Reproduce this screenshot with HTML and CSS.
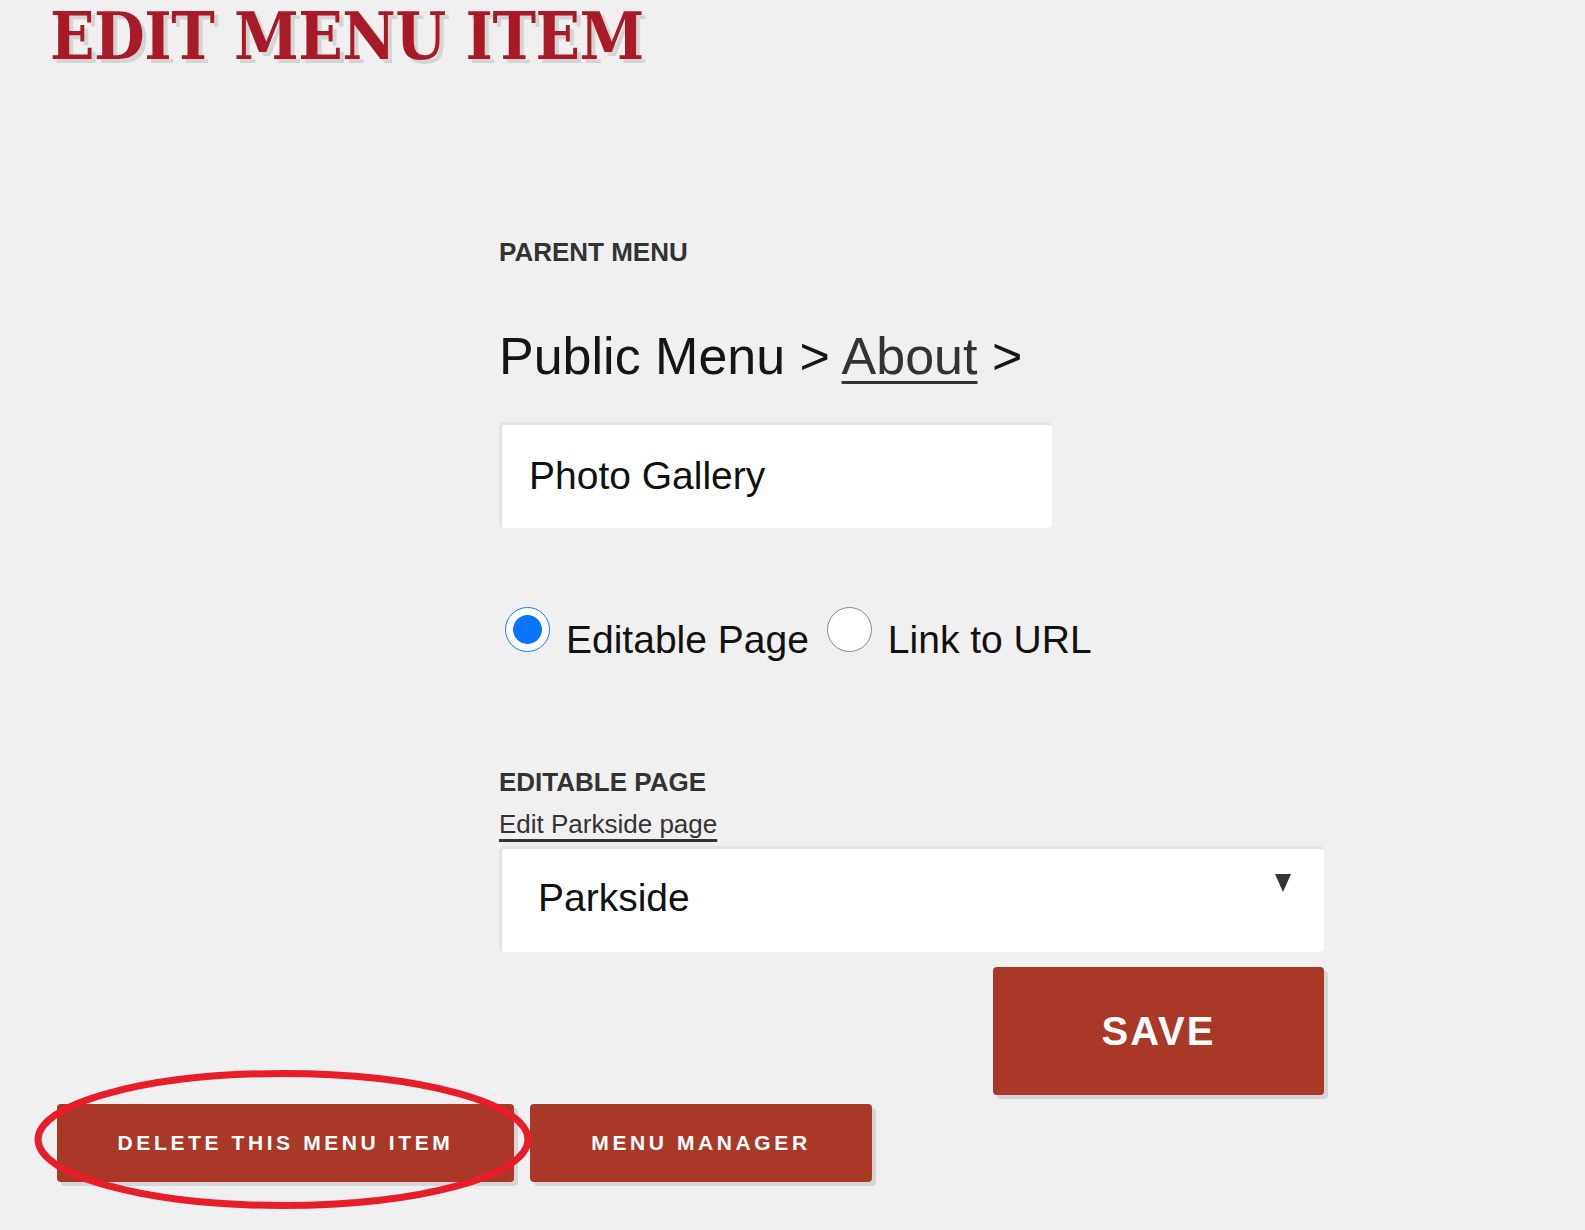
FILE: index.html
```html
<!DOCTYPE html>
<html lang="en">
<head>
<meta charset="utf-8">
<title>Edit Menu Item</title>
<link rel="stylesheet" href="styles.css">
</head>
<body>
<h1 class="page-title">EDIT MENU ITEM</h1>

<form class="edit-form">
  <div class="field-label">PARENT MENU</div>
  <div class="crumb">Public Menu &gt; <a class="crumb-link" href="#">About</a> &gt;</div>
  <div class="text-input">Photo Gallery</div>

  <div class="radio-row">
    <label class="radio-option">
      <span class="radio checked"></span>
      <span class="radio-text">Editable Page</span>
    </label>
    <label class="radio-option">
      <span class="radio"></span>
      <span class="radio-text">Link to URL</span>
    </label>
  </div>

  <div class="field-label label-page">EDITABLE PAGE</div>
  <div class="edit-link-row"><a class="edit-link" href="#">Edit Parkside page</a></div>
  <div class="select-box">
    <span class="select-value">Parkside</span>
    <svg class="select-arrow" width="16" height="18" viewBox="0 0 16 18"><polygon points="0,0 16,0 8,18" fill="#333"/></svg>
  </div>
  <button type="button" class="btn btn-save">SAVE</button>
</form>

<div class="actions">
  <button type="button" class="btn btn-small btn-delete">DELETE THIS MENU ITEM</button>
  <button type="button" class="btn btn-small btn-manager">MENU MANAGER</button>
  <svg class="highlight-ring" width="500" height="145" viewBox="0 0 500 145">
    <ellipse cx="250" cy="72.5" rx="245" ry="66" fill="none" stroke="#e81d2a" stroke-width="7"/>
  </svg>
</div>
</body>
</html>
```

FILE: styles.css
```css
html, body {
  margin: 0;
  padding: 0;
}
body {
  background: #f0f0f0;
  font-family: "Liberation Sans", Arial, sans-serif;
  color: #111;
  width: 1585px;
  min-height: 1230px;
}
.page-title {
  margin: 0;
  padding: 4px 0 0 50px;
  font-family: "DejaVu Serif Condensed", "DejaVu Serif", serif;
  font-stretch: condensed;
  font-weight: 700;
  font-size: 65px;
  line-height: 65px;
  color: #a91a28;
  text-shadow: 4px 4px 0 #d4d4d4;
  letter-spacing: -0.5px;
}
.edit-form {
  margin: 0 0 0 499px;
  width: 825px;
  display: flex;
  flex-direction: column;
  align-items: flex-start;
}
.field-label {
  margin-top: 168px;
  font-weight: 700;
  font-size: 26px;
  line-height: 30px;
  color: #333;
}
.crumb {
  margin-top: 59px;
  font-size: 52px;
  line-height: 60px;
  color: #151515;
  white-space: nowrap;
}
.crumb-link {
  color: #333;
  text-decoration: underline;
  text-decoration-thickness: 3px;
  text-underline-offset: 7px;
}
.text-input {
  margin-top: 36px;
  box-sizing: border-box;
  width: 553px;
  height: 106px;
  background: #fff;
  border-top: 3px solid #e4e4e4;
  border-left: 3px solid #e4e4e4;
  border-radius: 5px;
  padding-left: 27px;
  font-size: 39px;
  line-height: 102px;
  color: #111;
}
.radio-row {
  margin-top: 79px;
  display: flex;
  align-items: flex-start;
  height: 45px;
}
.radio-option {
  display: flex;
  align-items: flex-start;
}
.radio-option + .radio-option {
  margin-left: 18px;
}
.radio {
  box-sizing: border-box;
  width: 45px;
  height: 45px;
  flex: none;
  border-radius: 50%;
  background: #fff;
  border: 1.5px solid #8a8a8a;
  margin-left: 6px;
}
.radio-option + .radio-option .radio {
  margin-left: 0;
}
.radio.checked {
  border-color: #1a7cf5;
  background: radial-gradient(circle, #0a75ff 0 14px, #fff 14.8px);
}
.radio-text {
  margin-left: 16px;
  padding-top: 11px;
  font-size: 39px;
  line-height: 44px;
  color: #111;
  white-space: nowrap;
}
.label-page {
  margin-top: 115px;
}
.edit-link-row {
  margin-top: 12px;
  font-size: 26px;
  line-height: 30px;
}
.edit-link {
  color: #333;
  text-decoration: underline;
  text-decoration-thickness: 3px;
  text-underline-offset: 6px;
}
.select-box {
  margin-top: 7px;
  box-sizing: border-box;
  width: 825px;
  height: 106px;
  background: #fff;
  border-top: 3px solid #e4e4e4;
  border-left: 3px solid #e4e4e4;
  border-radius: 5px;
  padding: 0 33px 0 36px;
  display: flex;
  justify-content: space-between;
  align-items: flex-start;
}
.select-value {
  font-size: 39px;
  line-height: 97px;
  color: #111;
}
.select-arrow {
  margin-top: 25px;
  display: block;
}
.btn {
  border: 0;
  margin: 0;
  padding: 0;
  background: #aa3827;
  color: #fff;
  font-family: "Liberation Sans", Arial, sans-serif;
  font-weight: 700;
  border-radius: 4px;
  box-shadow: 4px 4px 0 #d6d6d6;
  cursor: pointer;
}
.btn-save {
  margin-top: 15px;
  align-self: flex-end;
  width: 331px;
  height: 128px;
  font-size: 40px;
  letter-spacing: 2px;
}
.actions {
  position: relative;
  margin: 9px 0 0 57px;
  display: flex;
  gap: 16px;
}
.btn-small {
  height: 78px;
  font-size: 21px;
  letter-spacing: 3.6px;
}
.btn-delete {
  width: 457px;
}
.btn-manager {
  width: 342px;
}
.highlight-ring {
  position: absolute;
  left: -24px;
  top: -37px;
  pointer-events: none;
}
```
